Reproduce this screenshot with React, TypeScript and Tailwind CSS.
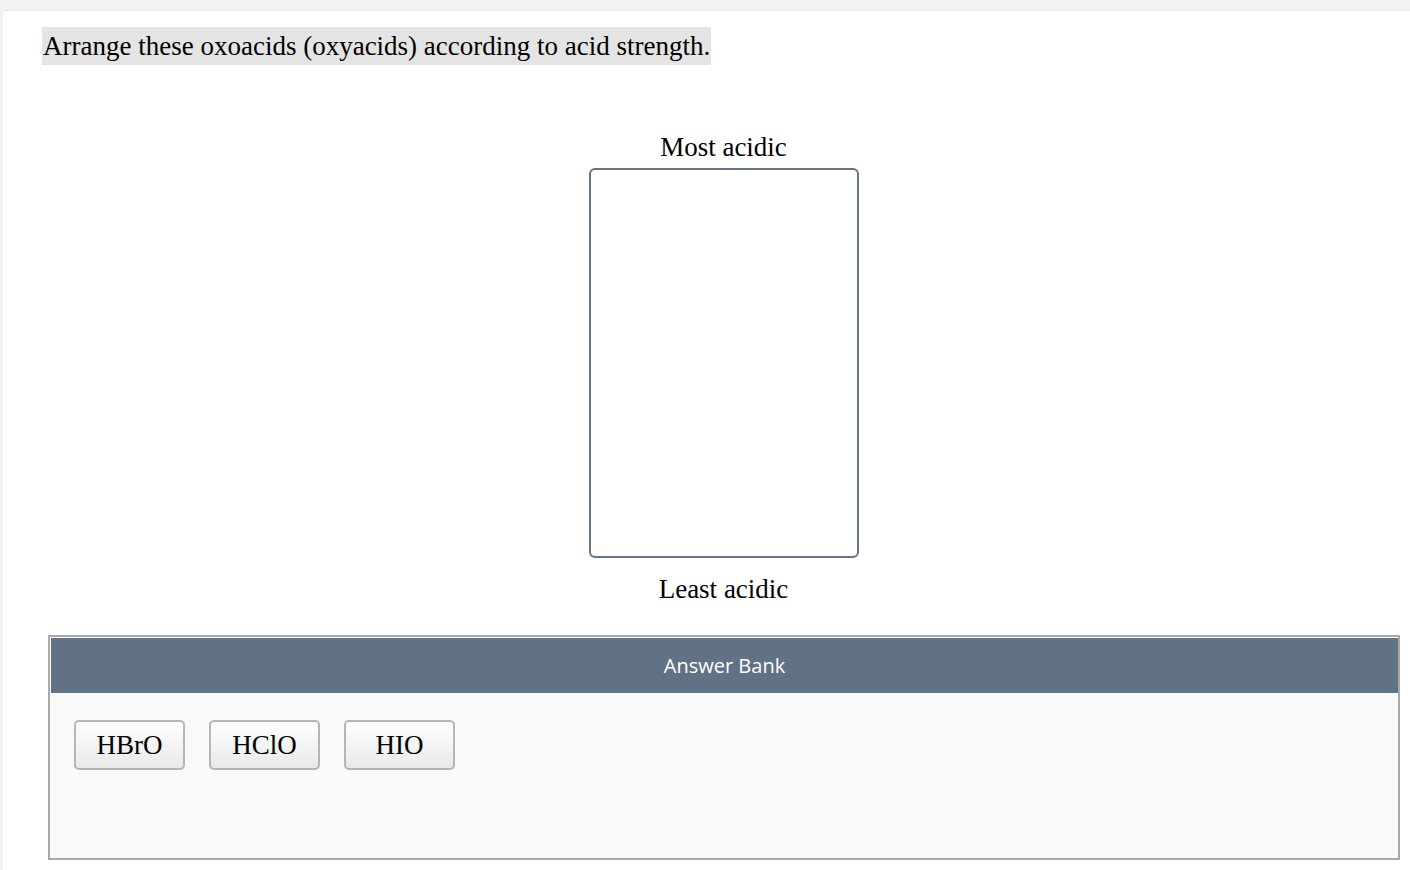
const serif = "font-['Liberation_Serif','Times_New_Roman',serif]";

const answers = ["HBrO", "HClO", "HIO"];

export default function App() {
  return (
    <div className="min-h-[870px] bg-[#f2f2f2] pt-[10px] pl-[3px]">
      <div className="min-h-[860px] border-t border-[#e6e6e6] bg-white pl-[39px] pr-[10px] pt-[16px]">
        <p className={`${serif} inline-block bg-[#e4e4e4] px-px text-[27px] leading-[38px] text-black`}>
          Arrange these oxoacids (oxyacids) according to acid strength.
        </p>

        <div className="mt-[64px] flex flex-col items-center pl-[5px]">
          <div className={`${serif} text-[27px] leading-[36px] text-black`}>Most acidic</div>
          <div className="mt-[3px] h-[390px] w-[270px] rounded-[6px] border-2 border-[#66758a] bg-white" />
          <div className={`${serif} mt-[13px] text-[27px] leading-[36px] text-black`}>Least acidic</div>
        </div>

        <div className="ml-[6px] mt-[28px] border-2 border-[#a8a8a8] pl-px pt-px">
          <div className="flex h-[55px] items-center justify-center bg-[#627286] font-['Open_Sans',sans-serif] text-[20px] font-medium text-white">
            Answer Bank
          </div>
          <div className="flex h-[165px] items-start gap-[24px] bg-[#f9f9f9] pl-[23px] pt-[27px]">
            {answers.map((a) => (
              <div
                key={a}
                className={`${serif} flex h-[50px] w-[111px] items-center justify-center rounded-[5px] border-2 border-[#b5b5b5] bg-gradient-to-b from-white to-[#e9e9e9] text-[27px] text-black`}
              >
                {a}
              </div>
            ))}
          </div>
        </div>
      </div>
    </div>
  );
}
